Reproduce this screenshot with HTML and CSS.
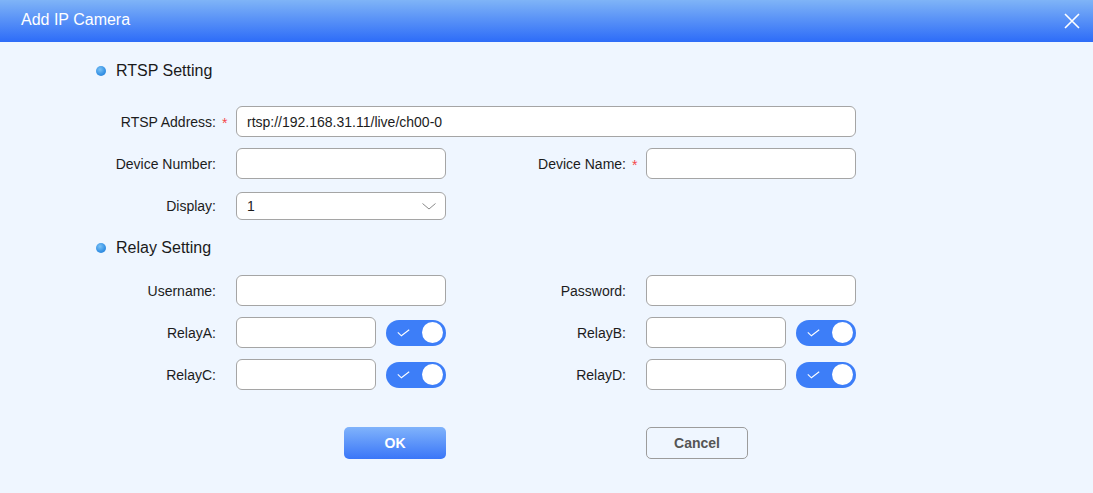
FILE: index.html
```html
<!DOCTYPE html>
<html lang="en">
<head>
<meta charset="utf-8">
<title>Add IP Camera</title>
<link rel="stylesheet" href="styles.css">
</head>
<body>
<div class="dialog">
  <div class="dialog-header">
    <span class="dialog-title">Add IP Camera</span>
    <svg class="close-icon" width="16" height="16" viewBox="0 0 16 16"><path d="M1 1L15 15M15 1L1 15" stroke="#fff" stroke-width="1.6" fill="none"/></svg>
  </div>
  <div class="dialog-body">
    <div class="section-title first"><span class="dot"></span>RTSP Setting</div>
    <div class="rows">
      <div class="row">
        <div class="field">
          <label class="label">RTSP Address:</label><span class="star">*</span>
          <input class="input wide" type="text" value="rtsp://192.168.31.11/live/ch00-0">
        </div>
      </div>
      <div class="row">
        <div class="field">
          <label class="label">Device Number:</label><span class="star"></span>
          <input class="input" type="text" value="">
        </div>
        <div class="field right">
          <label class="label">Device Name:</label><span class="star">*</span>
          <input class="input" type="text" value="">
        </div>
      </div>
      <div class="row">
        <div class="field">
          <label class="label">Display:</label><span class="star"></span>
          <div class="select"><span>1</span><svg width="14" height="7" viewBox="0 0 14 7"><path d="M0.5 0.5L7 6L13.5 0.5" stroke="#8a8a8a" stroke-width="1" fill="none"/></svg></div>
        </div>
      </div>
    </div>
    <div class="section-title second"><span class="dot"></span>Relay Setting</div>
    <div class="rows">
      <div class="row">
        <div class="field">
          <label class="label">Username:</label><span class="star"></span>
          <input class="input" type="text" value="">
        </div>
        <div class="field right">
          <label class="label">Password:</label><span class="star"></span>
          <input class="input" type="text" value="">
        </div>
      </div>
      <div class="row">
        <div class="field">
          <label class="label">RelayA:</label><span class="star"></span>
          <div class="relay"><input class="input short" type="text" value=""><div class="switch"><svg class="check" width="13" height="8" viewBox="0 0 13 8"><path d="M0.8 3.4L4.4 6.8L12.2 0.8" stroke="#fff" stroke-width="1.1" fill="none"/></svg><span class="knob"></span></div></div>
        </div>
        <div class="field right">
          <label class="label">RelayB:</label><span class="star"></span>
          <div class="relay"><input class="input short" type="text" value=""><div class="switch"><svg class="check" width="13" height="8" viewBox="0 0 13 8"><path d="M0.8 3.4L4.4 6.8L12.2 0.8" stroke="#fff" stroke-width="1.1" fill="none"/></svg><span class="knob"></span></div></div>
        </div>
      </div>
      <div class="row">
        <div class="field">
          <label class="label">RelayC:</label><span class="star"></span>
          <div class="relay"><input class="input short" type="text" value=""><div class="switch"><svg class="check" width="13" height="8" viewBox="0 0 13 8"><path d="M0.8 3.4L4.4 6.8L12.2 0.8" stroke="#fff" stroke-width="1.1" fill="none"/></svg><span class="knob"></span></div></div>
        </div>
        <div class="field right">
          <label class="label">RelayD:</label><span class="star"></span>
          <div class="relay"><input class="input short" type="text" value=""><div class="switch"><svg class="check" width="13" height="8" viewBox="0 0 13 8"><path d="M0.8 3.4L4.4 6.8L12.2 0.8" stroke="#fff" stroke-width="1.1" fill="none"/></svg><span class="knob"></span></div></div>
        </div>
      </div>
    </div>
    <div class="buttons">
      <div class="btn-cell left"><button class="btn ok">OK</button></div>
      <div class="btn-cell"><button class="btn cancel">Cancel</button></div>
    </div>
  </div>
</div>
</body>
</html>
```

FILE: styles.css
```css
* { box-sizing: border-box; }
html, body {
  margin: 0;
  padding: 0;
  width: 1093px;
  height: 493px;
  overflow: hidden;
  font-family: "Liberation Sans", Arial, sans-serif;
  color: #1c1c1c;
  background: #eff6ff;
}
.dialog {
  width: 1093px;
  height: 493px;
  display: flex;
  flex-direction: column;
  background: #eff6ff;
}
.dialog-header {
  height: 42px;
  flex: none;
  display: flex;
  align-items: center;
  justify-content: space-between;
  padding: 0 13px 2px 21px;
  background: linear-gradient(to bottom, #7fb4f7 0%, #5a93f7 45%, #2d6cf8 100%);
}
.dialog-title {
  color: #fff;
  font-size: 16px;
  line-height: 20px;
}
.close-icon { display: block; margin-top: 1px; }
.dialog-body {
  flex: 1;
  display: flex;
  flex-direction: column;
}
.section-title {
  display: flex;
  align-items: center;
  padding-left: 96px;
  font-size: 16px;
  line-height: 20px;
  height: 20px;
  color: #1a1a1a;
}
.section-title.first { margin-top: 19px; margin-bottom: 25px; }
.section-title.second { margin-top: 17px; margin-bottom: 17px; }
.dot {
  width: 10px;
  height: 10px;
  border-radius: 50%;
  margin-right: 10px;
  background: radial-gradient(circle at 40% 35%, #7cc2f5 0%, #3a95e6 55%, #1f78d2 100%);
}
.rows {
  display: flex;
  flex-direction: column;
  gap: 11px;
}
.row {
  display: flex;
  height: 31px;
}
.field {
  display: flex;
  align-items: center;
  height: 31px;
}
.label {
  width: 216px;
  text-align: right;
  font-size: 14px;
  color: #1c1c1c;
  white-space: nowrap;
}
.field.right .label { width: 180px; }
.star {
  width: 20px;
  padding-left: 6px;
  color: #f5484a;
  font-size: 14px;
  line-height: 14px;
  padding-top: 2px;
}
.input {
  width: 210px;
  height: 31px;
  border: 1px solid #a5a5a5;
  border-radius: 6px;
  background: #fff;
  padding: 0 10px;
  font-family: "Liberation Sans", Arial, sans-serif;
  font-size: 14px;
  color: #1c1c1c;
  outline: none;
}
.input.wide { width: 620px; }
.input.short { width: 140px; }
.select {
  width: 210px;
  height: 28px;
  border: 1px solid #a5a5a5;
  border-radius: 6px;
  background: #fff;
  display: flex;
  align-items: center;
  justify-content: space-between;
  padding: 0 9px 0 10px;
  font-size: 14px;
}
.select svg { display: block; margin-top: 2px; }
.relay {
  width: 210px;
  display: flex;
  align-items: center;
  justify-content: space-between;
}
.switch {
  width: 60px;
  height: 26px;
  border-radius: 13px;
  background: #3d7ef8;
  display: flex;
  align-items: center;
  justify-content: space-between;
  padding: 0 3px 0 11px;
}
.check { display: block; margin-top: 1px; }
.knob {
  width: 21px;
  height: 21px;
  border-radius: 50%;
  background: #fff;
}
.buttons {
  display: flex;
  margin-top: 37px;
}
.btn-cell { display: flex; }
.btn-cell.left { width: 446px; justify-content: flex-end; margin-right: 200px; }
.btn {
  width: 102px;
  height: 32px;
  border-radius: 5px;
  font-family: "Liberation Sans", Arial, sans-serif;
  font-size: 14px;
  font-weight: bold;
  cursor: pointer;
  padding: 0;
}
.btn.ok {
  border: none;
  color: #fff;
  background: linear-gradient(to bottom, #80b3fb 0%, #3a76f8 100%);
}
.btn.cancel {
  border: 1px solid #9c9c9c;
  color: #555;
  background: transparent;
}
```
